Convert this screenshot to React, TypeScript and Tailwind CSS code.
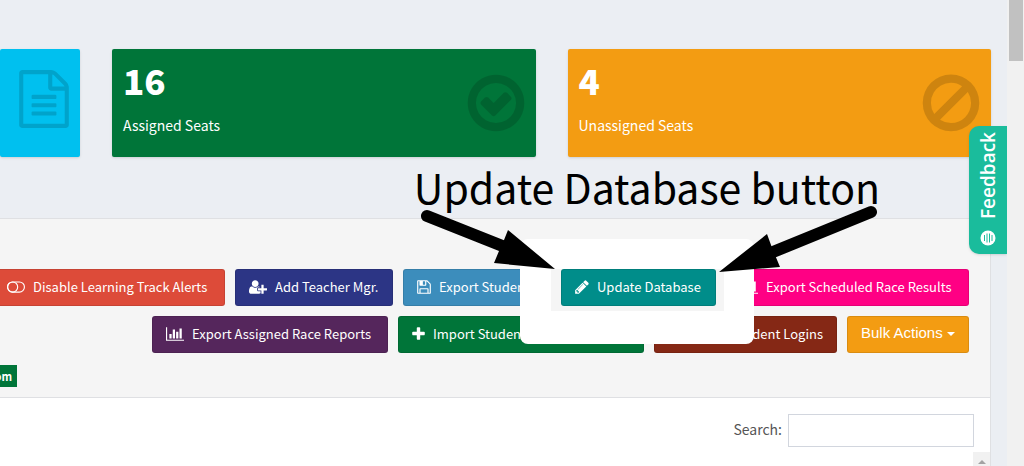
import type { ReactNode } from 'react'

interface IconProps {
  className?: string
}

interface SeatCardProps {
  color: string
  value?: string
  label?: string
  icon: ReactNode
}

interface ToolButtonProps {
  color: string
  icon?: ReactNode
  className?: string
  children: ReactNode
}

const FileIcon = ({ className }: IconProps) => (
  <svg viewBox="0 0 1792 1792" fill="currentColor" className={className}>
    <path d="M1596 380q28 28 48 76t20 88v1152q0 40-28 68t-68 28h-1344q-40 0-68-28t-28-68v-1600q0-40 28-68t68-28h896q40 0 88 20t76 48zm-444-244v376h376q-10-29-22-41l-313-313q-12-12-41-22zm384 1528v-1024h-416q-40 0-68-28t-28-68v-416h-768v1536h1280zm-1024-864q0-14 9-23t23-9h704q14 0 23 9t9 23v64q0 14-9 23t-23 9h-704q-14 0-23-9t-9-23v-64zm736 224q14 0 23 9t9 23v64q0 14-9 23t-23 9h-704q-14 0-23-9t-9-23v-64q0-14 9-23t23-9h704zm0 256q14 0 23 9t9 23v64q0 14-9 23t-23 9h-704q-14 0-23-9t-9-23v-64q0-14 9-23t23-9h704z" />
  </svg>
)

const CheckIcon = ({ className }: IconProps) => (
  <svg viewBox="0 0 1792 1792" fill="currentColor" className={className}>
    <path d="M1299 813l-422 422q-19 19-45 19t-45-19l-294-294q-19-19-19-45t19-45l102-102q19-19 45-19t45 19l147 147 275-275q19-19 45-19t45 19l102 102q19 19 19 45t-19 45zm141 83q0-148-73-273t-198-198-273-73-273 73-198 198-73 273 73 273 198 198 273 73 273-73 198-198 73-273zm224 0q0 209-103 385.5t-279.5 279.5-385.5 103-385.5-103-279.5-279.5-103-385.5 103-385.5 279.5-279.5 385.5-103 385.5 103 279.5 279.5 103 385.5z" />
  </svg>
)

const BanIcon = ({ className }: IconProps) => (
  <svg viewBox="0 0 1792 1792" fill="currentColor" className={className}>
    <path d="M1440 893q0-161-87-295l-754 753q137 89 297 89 111 0 211.5-43.5t173.5-116.5 116-174.5 43-212.5zm-999 299l755-754q-135-91-300-91-148 0-273 73t-198 199-73 274q0 162 89 299zm1223-299q0 157-61 300t-163.5 246-245 164-298.5 61-298.5-61-245-164-163.5-246-61-300 61-299.5 163.5-245.5 245-164 298.5-61 298.5 61 245 164 163.5 245.5 61 299.5z" />
  </svg>
)

const ToggleIcon = () => (
  <svg viewBox="0 0 2048 1792" fill="none" stroke="currentColor" strokeWidth="130" className="h-4 w-[18px]">
    <rect x="65" y="321" width="1918" height="1150" rx="575" />
    <circle cx="640" cy="896" r="575" />
  </svg>
)

const UserPlusIcon = () => (
  <svg viewBox="0 0 2048 1792" fill="currentColor" className="h-4 w-[18px]">
    <path d="M704 896q-159 0-271.5-112.5T320 512t112.5-271.5T704 128t271.5 112.5T1088 512 975.5 783.5 704 896zm960 128h352q13 0 22.5 9.5t9.5 22.5v192q0 13-9.5 22.5t-22.5 9.5h-352v352q0 13-9.5 22.5t-22.5 9.5h-192q-13 0-22.5-9.5t-9.5-22.5v-352h-352q-13 0-22.5-9.5t-9.5-22.5v-192q0-13 9.5-22.5t22.5-9.5h352V672q0-13 9.5-22.5T1440 640h192q13 0 22.5 9.5t9.5 22.5v352zM928 1248q0 52 38 90t90 38h256v238q-68 50-171 50H267q-121 0-194-69T0 1405q0-53 3.5-103.5t14-109T45 1084t43-97.5 62-81 85.5-53.5T346 832q19 0 39 17 79 61 154.5 91.5T704 971t164.5-30.5T1023 849q20-17 39-17 132 0 217 96h-223q-52 0-90 38t-38 90v192z" />
  </svg>
)

const SaveIcon = () => (
  <svg viewBox="128 0 1536 1792" fill="currentColor" className="h-4 w-[14px]">
    <path d="M512 1536h768v-384h-768v384zm896 0h128v-896q0-14-10-38.5t-20-34.5l-281-281q-10-10-34-20t-39-10v416q0 40-28 68t-68 28h-576q-40 0-68-28t-28-68v-416h-128v1280h128v-416q0-40 28-68t68-28h832q40 0 68 28t28 68v416zm-384-928v-320q0-13-9.5-22.5t-22.5-9.5h-192q-13 0-22.5 9.5t-9.5 22.5v320q0 13 9.5 22.5t22.5 9.5h192q13 0 22.5-9.5t9.5-22.5zm640 32v928q0 40-28 68t-68 28h-1344q-40 0-68-28t-28-68v-1344q0-40 28-68t68-28h928q40 0 88 20t76 48l280 280q28 28 48 76t20 88z" />
  </svg>
)

const PencilIcon = () => (
  <svg viewBox="128 0 1536 1792" fill="currentColor" className="h-4 w-[14px]">
    <path d="M491 1536l91-91-235-235-91 91v107h128v128h107zm523-928q0-22-22-22-10 0-17 7l-542 542q-7 7-7 17 0 22 22 22 10 0 17-7l542-542q7-7 7-17zm-54-192l416 416-832 832h-416v-416zm683 96q0 53-37 90l-166 166-416-416 166-165q36-38 90-38 53 0 91 38l235 234q37 39 37 91z" />
  </svg>
)

const PlusIcon = () => (
  <svg viewBox="192 0 1408 1792" fill="currentColor" className="h-4 w-[13px]">
    <path d="M1600 736v192q0 40-28 68t-68 28h-416v416q0 40-28 68t-68 28h-192q-40 0-68-28t-28-68v-416h-416q-40 0-68-28t-28-68v-192q0-40 28-68t68-28h416v-416q0-40 28-68t68-28h192q40 0 68 28t28 68v416h416q40 0 68 28t28 68z" />
  </svg>
)

const ChartIcon = () => (
  <svg viewBox="0 0 2048 1792" fill="currentColor" className="h-4 w-[18px]">
    <path d="M640 896v512H384V896h256zm384-512v1024H768V384h256zm1024 1152v128H0V128h128v1408h1920zM1408 640v768h-256V640h256zm384-384v1152h-256V256h256z" />
  </svg>
)

const SeatCard = ({ color, value, label, icon }: SeatCardProps) => (
  <div className={`flex h-[108px] justify-between overflow-hidden rounded-xs pl-[11px] text-white shadow-sm ${color}`}>
    <div>
      <h3 className="mt-[7px] text-[35px] leading-[48px] font-black">{value}</h3>
      <p className="mt-[9px] text-[14px] leading-6">{label}</p>
    </div>
    <div className="mt-[21px] mr-[7px] text-black/15">{icon}</div>
  </div>
)

const ToolButton = ({ color, icon, className = '', children }: ToolButtonProps) => (
  <button
    type="button"
    className={`flex h-[37px] shrink-0 items-center gap-2 rounded-[3px] border border-black/10 px-[13px] pb-0.5 whitespace-nowrap text-white ${color} ${className}`}
  >
    {icon}
    {children}
  </button>
)

// Title and arrows that point at the highlighted button
const Annotation = () => (
  <div className="pointer-events-none absolute top-[157px] right-[127px] z-20 h-[130px] w-[469px]">
    <p className="text-right text-[41px] leading-[58px] whitespace-nowrap text-black">
      Update Database button
    </p>
    <svg viewBox="411 157 469 130" className="absolute inset-0 h-full w-full">
      <g stroke="#000" strokeWidth="12" strokeLinecap="round">
        <path d="M427 216L505 247" />
        <path d="M871 212L768 254" />
      </g>
      <path d="M508 230L555 269L494 263L499 251L504 240z" />
      <path d="M767 234L719 272L780 267L775 255L771 245z" />
    </svg>
  </div>
)

const FeedbackTab = () => (
  <button
    type="button"
    className="absolute top-[126px] right-0 z-30 flex h-[128px] w-[38px] flex-col items-center justify-between rounded-l-[10px] bg-[#1abc9c] pt-1.5 pb-2 text-white shadow"
  >
    <span className="rotate-180 font-['Open_Sans',sans-serif] text-[19px] leading-6 font-semibold [writing-mode:vertical-rl]">
      Feedback
    </span>
    <svg viewBox="0 0 16 16" className="h-4 w-4">
      <circle cx="8" cy="8" r="7.5" fill="#fff" />
      <path d="M4.5 5v6M7 3.5v9M9.5 3.5v9M12 5v6" stroke="#1abc9c" strokeWidth="1" />
    </svg>
  </button>
)

export default function App() {
  return (
    <div className="flex h-screen overflow-hidden bg-[#ebeef3] font-['Noto_Sans_CJK_SC',sans-serif] text-[#555]">
      <main className="relative flex min-w-0 flex-1 flex-col overflow-hidden pt-[49px]">
        <div className="mr-4 grid grid-cols-[80px_1fr_1fr] gap-8">
          <SeatCard color="bg-[#00c0ef]" icon={<FileIcon className="size-[58px]" />} />
          <SeatCard
            color="bg-[#007539]"
            value="16"
            label="Assigned Seats"
            icon={<CheckIcon className="size-[66px]" />}
          />
          <SeatCard
            color="bg-[#f39c12]"
            value="4"
            label="Unassigned Seats"
            icon={<BanIcon className="size-[66px]" />}
          />
        </div>

        <section className="mt-[61px] mr-4 flex flex-1 flex-col border-t border-r border-[#dfe0e3] bg-white">
          <div className="border-b border-[#dfe0e3] bg-[#f5f5f5] pt-[50px] pb-[10px] text-[13px]">
            <div className="mr-[21px] flex justify-end gap-[10px]">
              <ToolButton color="bg-[#dd4b39]" icon={<ToggleIcon />} className="w-[232px]">
                Disable Learning Track Alerts
              </ToolButton>
              <ToolButton color="bg-[#2c3585]" icon={<UserPlusIcon />} className="w-[158px]">
                Add Teacher Mgr.
              </ToolButton>
              <ToolButton color="bg-[#3c8dbc]" icon={<SaveIcon />} className="w-[148px]">
                Export Students
              </ToolButton>
              <div className="relative z-10 shrink-0">
                <div className="absolute -top-[30px] -right-[38px] -bottom-[38px] -left-[41px] rounded-lg bg-white" />
                <div className="absolute top-0 -right-2 -bottom-[5px] -left-[10px] bg-[#f5f5f5]" />
                <ToolButton color="bg-[#008d8a]" icon={<PencilIcon />} className="relative w-[155px]">
                  Update Database
                </ToolButton>
              </div>
              <ToolButton color="bg-[#ff0084]" icon={<ChartIcon />} className="w-[243px]">
                Export Scheduled Race Results
              </ToolButton>
            </div>

            <div className="mt-[10px] mr-[21px] flex justify-end gap-[10px]">
              <ToolButton color="bg-[#55265c]" icon={<ChartIcon />} className="w-[236px]">
                Export Assigned Race Reports
              </ToolButton>
              <ToolButton color="bg-[#007539]" icon={<PlusIcon />} className="w-[246px]">
                Import Students
              </ToolButton>
              <ToolButton color="bg-[#852815]" icon={<SaveIcon />} className="w-[183px] justify-end">
                Print Student Logins
              </ToolButton>
              <ToolButton
                color="bg-[#f39c12]"
                className="w-[122px] font-['Liberation_Sans',sans-serif] text-[15px]"
              >
                Bulk Actions
                <span className="-ml-1 border-x-4 border-t-4 border-x-transparent border-t-white" />
              </ToolButton>
            </div>

            <div className="mt-[12px] flex h-[22px] w-[17px] items-center justify-end overflow-hidden bg-[#007539] pr-[5px] text-[11px] font-bold text-white">
              om
            </div>
          </div>

          <div className="mt-4 mr-4 flex items-center justify-end gap-1.5">
            <label htmlFor="search" className="pb-1 text-[14px] leading-6">
              Search:
            </label>
            <input id="search" type="search" className="h-[33px] w-[186px] border border-[#d2d6de] bg-white px-2 text-[14px] outline-none" />
          </div>
          <div className="mt-[5px] flex flex-1 justify-end">
            <div className="flex w-[17px] justify-center bg-[#f1f1f1] pt-2">
              <span className="h-0 border-x-4 border-b-4 border-x-transparent border-b-[#a3a3a3]" />
            </div>
          </div>
        </section>

        <Annotation />
        <FeedbackTab />
      </main>

      <div className="flex w-[17px] justify-center bg-[#f1f1f1]">
        <div className="h-[61px] w-[14px] bg-[#c1c1c1]" />
      </div>
    </div>
  )
}
